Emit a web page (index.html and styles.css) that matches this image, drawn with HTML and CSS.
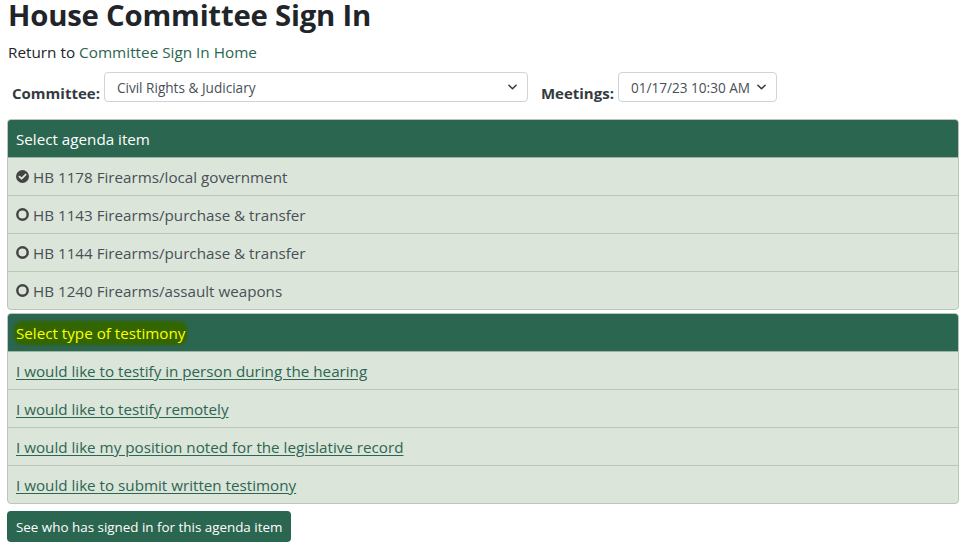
FILE: index.html
```html
<!DOCTYPE html>
<html lang="en">
<head>
<meta charset="utf-8">
<title>House Committee Sign In</title>
<link rel="stylesheet" href="styles.css">
</head>
<body>
<div class="page">
  <h1 class="title">House Committee Sign In</h1>
  <p class="return">Return to <a href="#" class="home-link">Committee Sign In Home</a></p>

  <div class="filters">
    <label class="flabel">Committee:</label>
    <div class="select committee">
      <span>Civil Rights &amp; Judiciary</span>
      <svg class="chev" viewBox="0 0 10 6" width="9" height="6"><path d="M1 1 L5 5 L9 1" fill="none" stroke="#343a40" stroke-width="1.7" stroke-linecap="round" stroke-linejoin="round"/></svg>
    </div>
    <label class="flabel meet">Meetings:</label>
    <div class="select meeting">
      <span>01/17/23 10:30 AM</span>
      <svg class="chev" viewBox="0 0 10 6" width="9" height="6"><path d="M1 1 L5 5 L9 1" fill="none" stroke="#343a40" stroke-width="1.7" stroke-linecap="round" stroke-linejoin="round"/></svg>
    </div>
  </div>

  <div class="card">
    <div class="card-head">Select agenda item</div>
    <div class="row">
      <svg class="ico" viewBox="0 0 16 16" width="13" height="13"><circle cx="8" cy="8" r="8" fill="#444"/><path d="M4.3 8.2 L6.9 10.7 L11.8 5.6" fill="none" stroke="#dbe5da" stroke-width="2.3" stroke-linecap="round" stroke-linejoin="round"/></svg>
      <span>HB 1178 Firearms/local government</span>
    </div>
    <div class="row">
      <svg class="ico" viewBox="0 0 16 16" width="13" height="13"><circle cx="8" cy="8" r="6.4" fill="none" stroke="#444" stroke-width="3"/></svg>
      <span>HB 1143 Firearms/purchase &amp; transfer</span>
    </div>
    <div class="row">
      <svg class="ico" viewBox="0 0 16 16" width="13" height="13"><circle cx="8" cy="8" r="6.4" fill="none" stroke="#444" stroke-width="3"/></svg>
      <span>HB 1144 Firearms/purchase &amp; transfer</span>
    </div>
    <div class="row">
      <svg class="ico" viewBox="0 0 16 16" width="13" height="13"><circle cx="8" cy="8" r="6.4" fill="none" stroke="#444" stroke-width="3"/></svg>
      <span>HB 1240 Firearms/assault weapons</span>
    </div>
  </div>

  <div class="card second">
    <div class="card-head"><span class="mark">Select type of testimony</span></div>
    <div class="row"><a href="#" class="tlink">I would like to testify in person during the hearing</a></div>
    <div class="row"><a href="#" class="tlink">I would like to testify remotely</a></div>
    <div class="row"><a href="#" class="tlink">I would like my position noted for the legislative record</a></div>
    <div class="row"><a href="#" class="tlink">I would like to submit written testimony</a></div>
  </div>

  <button class="btn">See who has signed in for this agenda item</button>

  <h3 class="subhead">Individuals who have signed in to testify for this agenda item</h3>
</div>
</body>
</html>
```

FILE: styles.css
```css
html, body {
  margin: 0;
  padding: 0;
  background: #fff;
}
body {
  font-family: "Open Sans", "Noto Sans", "Liberation Sans", sans-serif;
  color: #212529;
  font-size: 16px;
}
.page {
  padding: 0 12px 0 7px;
}
.title {
  margin: 0;
  padding-left: 1px;
  font-size: 29.3px;
  line-height: 30px;
  font-weight: 700;
  color: #212529;
  letter-spacing: -0.2px;
}
.return {
  margin: 12px 0 0 0;
  padding-left: 1px;
  font-size: 15.3px;
  line-height: 20px;
}
.home-link {
  color: #2b6650;
  text-decoration: none;
}
.filters {
  margin-top: 10px;
  display: flex;
  align-items: flex-end;
  height: 31px;
  padding-left: 5px;
}
.flabel {
  font-weight: 700;
  font-size: 15px;
  line-height: 20px;
  color: #343a40;
  margin-right: 4px;
}
.flabel.meet {
  margin-left: 13px;
}
.select {
  box-sizing: border-box;
  height: 30px;
  border: 1px solid #ced4da;
  border-radius: 4px;
  background: #fff;
  display: flex;
  align-items: center;
  justify-content: space-between;
  padding: 0 10px 0 12px;
  font-size: 13.6px;
  color: #495057;
  align-self: flex-start;
}
.committee { width: 424px; }
.meeting { width: 159px; }
.chev { flex: none; }
.card {
  margin-top: 16px;
  border: 1px solid #b9c6b8;
  border-radius: 4px;
  overflow: hidden;
  background: #dbe5da;
  width: 952px;
  box-sizing: border-box;
}
.card.second {
  margin-top: 3px;
}
.card-head {
  background: #2b6650;
  color: #fff;
  height: 37px;
  display: flex;
  align-items: center;
  padding: 0 8px;
  font-size: 15.2px;
}
.row {
  height: 37px;
  border-top: 1px solid #b9c6b8;
  display: flex;
  align-items: center;
  padding: 0 8px;
  font-size: 15.2px;
  color: #495057;
}
.card-head + .row {
  border-top-color: #9fb3a2;
}
.ico {
  flex: none;
  margin-right: 4px;
}
.tlink {
  color: #2d6652;
  text-decoration: underline;
  text-underline-offset: 2px;
}
.mark {
  color: #ffff00;
  background: #336600;
  box-shadow: 0 0 3px 2px #336600;
  border-radius: 6px;
}
.btn {
  display: block;
  margin-top: 7px;
  height: 31px;
  padding: 0 9px;
  border: none;
  border-radius: 4px;
  background: #2b6650;
  color: #fff;
  font-family: "Open Sans", "Noto Sans", "Liberation Sans", sans-serif;
  font-size: 13.4px;
}
.subhead {
  margin: 6px 0 0 0;
  font-size: 22px;
  line-height: 28px;
  font-weight: 700;
}
```
